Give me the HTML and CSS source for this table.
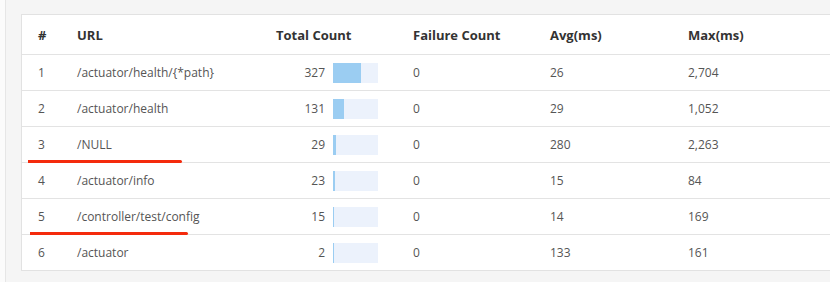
FILE: index.html
```html
<!DOCTYPE html>
<html>
<head>
<meta charset="utf-8">
<link rel="stylesheet" href="styles.css">
</head>
<body>
<div class="page">
  <div class="card">
    <div class="row head">
      <div class="c num">#</div>
      <div class="c">URL</div>
      <div class="c">Total Count</div>
      <div class="c">Failure Count</div>
      <div class="c">Avg(ms)</div>
      <div class="c">Max(ms)</div>
    </div>
    <div class="row">
      <div class="c num">1</div>
      <div class="c">/actuator/health/{*path}</div>
      <div class="c total"><span class="n">327</span><span class="bar"><span class="fill" style="width:28px"></span></span></div>
      <div class="c">0</div>
      <div class="c">26</div>
      <div class="c">2,704</div>
    </div>
    <div class="row">
      <div class="c num">2</div>
      <div class="c">/actuator/health</div>
      <div class="c total"><span class="n">131</span><span class="bar"><span class="fill" style="width:11px"></span></span></div>
      <div class="c">0</div>
      <div class="c">29</div>
      <div class="c">1,052</div>
    </div>
    <div class="row">
      <div class="c num">3</div>
      <div class="c">/NULL</div>
      <div class="c total"><span class="n">29</span><span class="bar"><span class="fill" style="width:2.5px"></span></span></div>
      <div class="c">0</div>
      <div class="c">280</div>
      <div class="c">2,263</div>
    </div>
    <div class="row">
      <div class="c num">4</div>
      <div class="c">/actuator/info</div>
      <div class="c total"><span class="n">23</span><span class="bar"><span class="fill" style="width:2px"></span></span></div>
      <div class="c">0</div>
      <div class="c">15</div>
      <div class="c">84</div>
    </div>
    <div class="row">
      <div class="c num">5</div>
      <div class="c">/controller/test/config</div>
      <div class="c total"><span class="n">15</span><span class="bar"><span class="fill" style="width:1.3px"></span></span></div>
      <div class="c">0</div>
      <div class="c">14</div>
      <div class="c">169</div>
    </div>
    <div class="row">
      <div class="c num">6</div>
      <div class="c">/actuator</div>
      <div class="c total"><span class="n">2</span><span class="bar"><span class="fill" style="width:0.2px"></span></span></div>
      <div class="c">0</div>
      <div class="c">133</div>
      <div class="c">161</div>
    </div>
  </div>
</div>
<div class="mark mark-a"></div>
<div class="mark mark-b"></div>
</body>
</html>
```
FILE: styles.css
```css
html, body {
  margin: 0;
  padding: 0;
  background: #fbfbfb;
}
body {
  position: relative;
  width: 830px;
  height: 282px;
  overflow: hidden;
  font-family: "Open Sans", "Liberation Sans", sans-serif;
  font-size: 12px;
  color: #555;
}
.page {
  margin-left: 5px;
  border-left: 1px solid #e6e6e6;
  background: #f5f5f5;
  padding: 14px 0 11px 15px;
  overflow: hidden;
}
.card {
  margin-right: -20px;
  background: #fff;
  border: 1px solid #e2e2e2;
}
.row {
  display: grid;
  grid-template-columns: 55px 199px 137px 137px 138px 1fr;
  align-items: center;
  height: 35px;
  border-bottom: 1px solid #e3e3e3;
}
.row:last-child {
  border-bottom: none;
}
.row.head {
  height: 39px;
  font-size: 13px;
  font-weight: 700;
  color: #333;
}
.c {
  white-space: nowrap;
}
.c.num {
  padding-left: 16px;
}
.total {
  display: flex;
  align-items: center;
}
.total .n {
  width: 49px;
  text-align: right;
  margin-right: 8px;
}
.bar {
  display: block;
  width: 45px;
  height: 20px;
  background: #ecf2fc;
}
.fill {
  display: block;
  height: 100%;
  background: #9bcdf2;
}
.mark {
  position: absolute;
  height: 3px;
  background: #f42a0c;
  border-radius: 0 2px 2px 0;
}
.mark-a {
  left: 28px;
  top: 160px;
  width: 154px;
}
.mark-b {
  left: 30px;
  top: 232px;
  width: 158px;
}
```
